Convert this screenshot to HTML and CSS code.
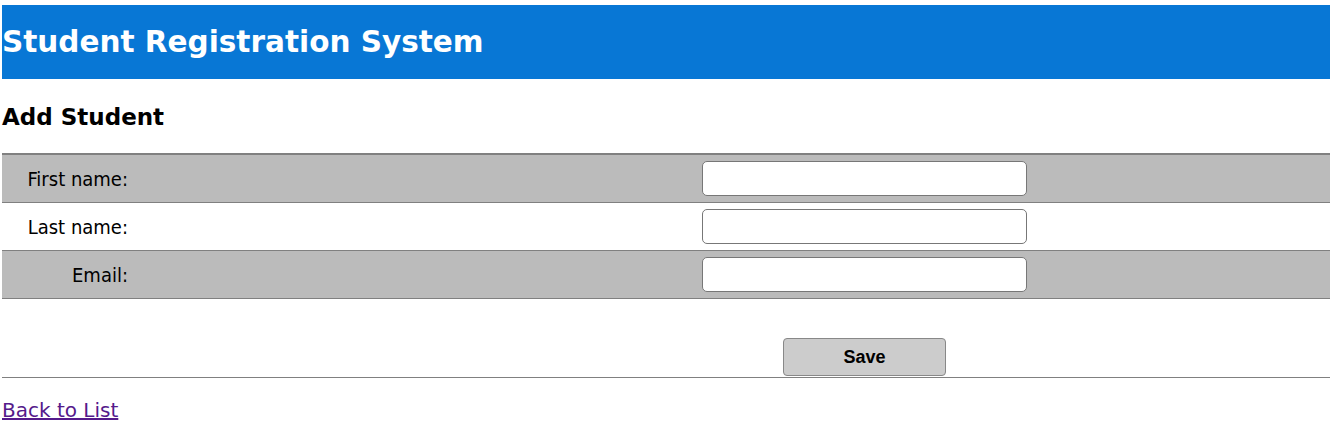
FILE: index.html
```html
<!DOCTYPE html>
<html>
<head>
<meta charset="utf-8">
<link rel="stylesheet" href="styles.css">
</head>
<body>
<div class="page">
  <header class="banner"><h1>Student Registration System</h1></header>
  <h2 class="sub">Add Student</h2>
  <form class="form">
    <div class="row shade"><label>First name:</label><span class="cell"><input type="text"></span></div>
    <div class="row"><label>Last name:</label><span class="cell"><input type="text"></span></div>
    <div class="row shade"><label>Email:</label><span class="cell"><input type="text"></span></div>
    <div class="actions"><button type="button">Save</button></div>
  </form>
  <hr class="rule">
  <a class="back" href="#">Back to List</a>
</div>
</body>
</html>
```
FILE: styles.css
```css
html, body { margin: 0; padding: 0; background: #fff; }
.page { width: 1328px; margin: 5px 0 0 2px; font-family: "DejaVu Sans", Verdana, sans-serif; }
.banner { background: #0877d5; height: 74px; display: flex; align-items: center; }
.banner h1 { margin: 0; color: #fff; font-size: 29.5px; font-weight: bold; }
.sub { margin: 25px 0 23px; font-size: 23px; font-weight: bold; color: #000; }
.form { border-top: 2px solid #808080; }
.row { display: grid; grid-template-columns: 126px 1fr; height: 47px; border-bottom: 1px solid #808080; align-items: center; }
.row.shade { background: #bbbbbb; }
.row label { font-family: "DejaVu Sans Condensed", Tahoma, sans-serif; font-size: 20px; text-align: right; color: #000; }
.cell { padding-left: 574px; display: flex; align-items: center; }
.cell input { width: 325px; height: 35px; box-sizing: border-box; border: 1px solid #777; border-radius: 5px; background: #fff; margin: 0; }
.actions { padding: 39px 0 1px 781px; }
.actions button { width: 163px; height: 38px; background: #cccccc; border: 1px solid #888; border-radius: 4px; font-family: "Liberation Sans", Arial, sans-serif; font-weight: bold; font-size: 18px; color: #000; }
.rule { margin: 0; border: 0; border-top: 1px solid #808080; }
.back { display: inline-block; margin-top: 20px; font-size: 20px; color: #551a8b; }
```
